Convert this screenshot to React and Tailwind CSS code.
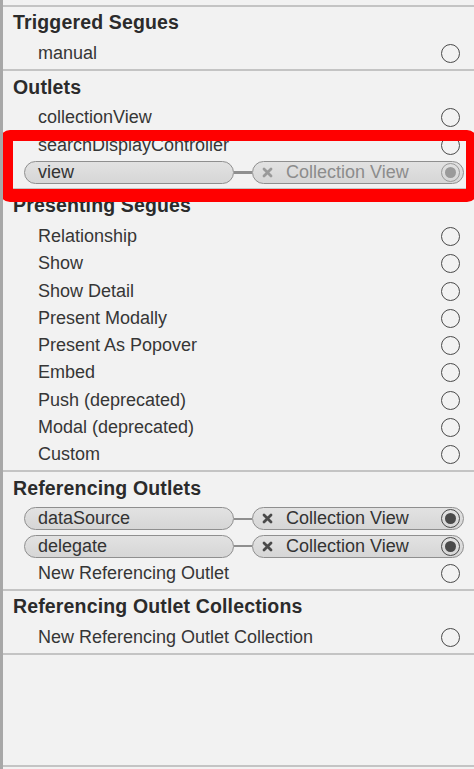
import React from 'react';

const font = { fontFamily: '"Liberation Sans", Arial, sans-serif' };

function Radio({ filled, dim }) {
  if (filled) {
    return (
      <span
        className={`flex h-[19px] w-[19px] items-center justify-center rounded-full border-[1.5px] ${
          dim ? 'border-[#9a9a9a]' : 'border-[#4a4a4a]'
        }`}
      >
        <span className={`h-[11px] w-[11px] rounded-full ${dim ? 'bg-[#9a9a9a]' : 'bg-[#4a4a4a]'}`} />
      </span>
    );
  }
  return <span className="h-[19px] w-[19px] rounded-full border-[1.5px] border-[#4a4a4a]" />;
}

function Separator() {
  return <div className="h-[2px] border-t-[2px] border-[#c4c4c4] bg-[#fafafa]" />;
}

function Header({ children }) {
  return (
    <div className="flex h-[32px] items-center pl-[10px] text-[19.5px] font-bold tracking-[0.15px] text-[#2b2b2b]">
      {children}
    </div>
  );
}

function Row({ label }) {
  return (
    <div className="flex h-[27.25px] items-center justify-between pl-[35px] pr-[14px] pt-[2px] text-[18px] text-[#363636]">
      <span>{label}</span>
      <Radio />
    </div>
  );
}

function XMark({ dim }) {
  return (
    <svg width="11" height="11" viewBox="0 0 11 11" className="shrink-0">
      <path
        d="M2 2 L9 9 M9 2 L2 9"
        stroke={dim ? '#9a9a9a' : '#4a4a4a'}
        strokeWidth="2.8"
        strokeLinecap="round"
      />
    </svg>
  );
}

function ConnectionRow({ label, target, dim }) {
  return (
    <div className="flex h-[27.25px] items-center pl-[21px] pt-[2px] text-[18px]">
      <div className="flex h-[23px] w-[210px] items-center rounded-full border-[1.5px] border-[#8f8f8f] bg-gradient-to-b from-[#e2e2e2] to-[#d6d6d6] pl-[13px] text-[#333]">
        {label}
      </div>
      <div className="h-[2.5px] w-[18px] bg-[#8f8f8f]" />
      <div className="flex h-[23px] w-[212px] items-center rounded-full border-[1.5px] border-[#8f8f8f] bg-gradient-to-b from-[#e2e2e2] to-[#d6d6d6] pl-[9px] pr-[3px]">
        <XMark dim={dim} />
        <span className={`ml-[13px] flex-1 ${dim ? 'text-[#8c8c8c]' : 'text-[#333]'}`}>{target}</span>
        <Radio filled dim={dim} />
      </div>
    </div>
  );
}

function Section({ title, children }) {
  return (
    <div>
      <Separator />
      <Header>{title}</Header>
      <div className="pb-[3px]">{children}</div>
    </div>
  );
}

export default function App() {
  const segues = [
    'Relationship',
    'Show',
    'Show Detail',
    'Present Modally',
    'Present As Popover',
    'Embed',
    'Push (deprecated)',
    'Modal (deprecated)',
    'Custom',
  ];

  return (
    <div style={font} className="relative h-[769px] w-[474px] overflow-hidden border-l-[3px] border-[#a8a8a8] bg-[#f2f2f2]">
      <div className="h-[5px]" />
      <Section title="Triggered Segues">
        <Row label="manual" />
      </Section>
      <Section title="Outlets">
        <Row label="collectionView" />
        <Row label="searchDisplayController" />
        <ConnectionRow label="view" target="Collection View" dim />
      </Section>
      <Section title="Presenting Segues">
        {segues.map((s) => (
          <Row key={s} label={s} />
        ))}
      </Section>
      <Section title="Referencing Outlets">
        <ConnectionRow label="dataSource" target="Collection View" />
        <ConnectionRow label="delegate" target="Collection View" />
        <Row label="New Referencing Outlet" />
      </Section>
      <Section title="Referencing Outlet Collections">
        <Row label="New Referencing Outlet Collection" />
      </Section>
      <Separator />
      <div className="h-[110px]" />
      <Separator />

      {/* highlight annotation */}
      <div className="pointer-events-none absolute left-[-3px] top-[130px] h-[72px] w-[477px] rounded-[10px] border-b-[13px] border-l-[13px] border-r-[11px] border-t-[11px] border-[#ff0000]" />
    </div>
  );
}
